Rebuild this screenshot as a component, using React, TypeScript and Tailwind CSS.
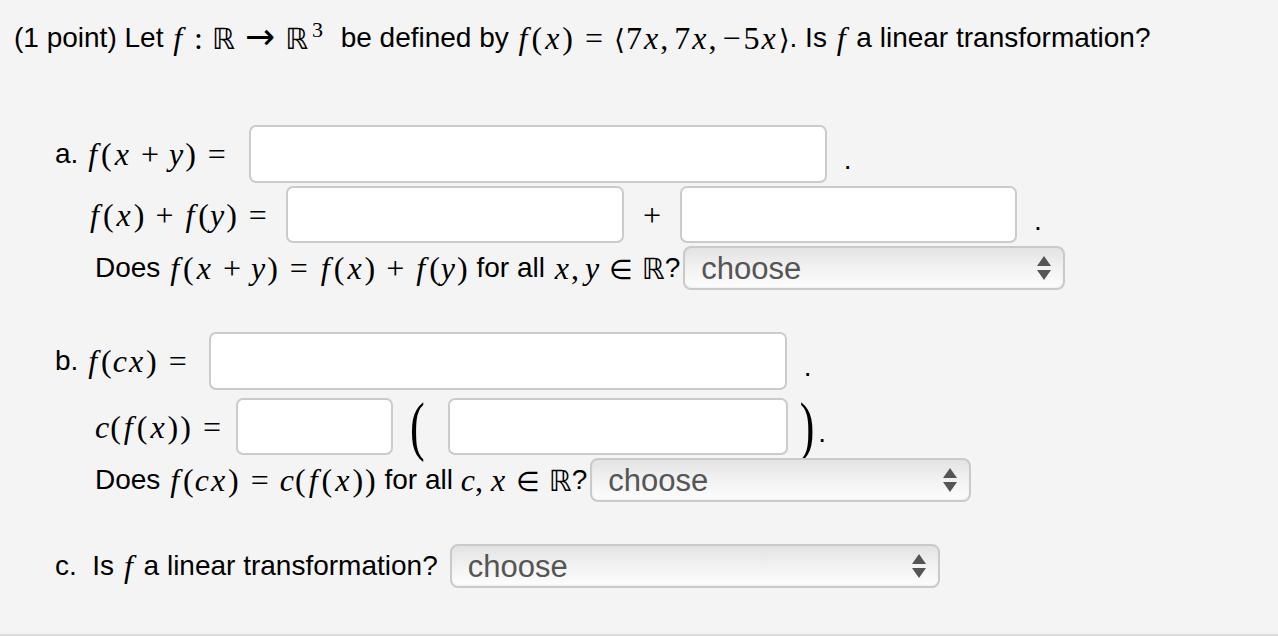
import React from "react";

// clases por caracter para imitar el espaciado de MathJax
const CLS: Record<string, string> = {
  f: "italic pl-[2px] pr-[3px]",
  x: "italic px-[2px]",
  y: "italic pr-[1px]",
  c: "italic",
  "(": "px-[1px]",
  ")": "px-[1px]",
  "+": "mx-[10px]",
  "=": "mx-[11px]",
  "∈": "mx-[9px] font-['DejaVu_Sans'] text-[27px]",
  "→": "mx-[10px] font-['DejaVu_Sans'] text-[36px] leading-none",
  ":": "mx-[9px]",
  ",": "mr-[6px]",
  "−": "mr-[3px]",
  "⟨": "font-['DejaVu_Serif'] text-[28px] pr-[1px]",
  "⟩": "font-['DejaVu_Serif'] text-[28px] pl-[1px]",
  "ℝ": "font-['DejaVu_Sans'] text-[29px]",
  "³": "ml-[4px] mr-[2px] text-[22px] relative -top-[12px]",
};

function M({ t }: { t: string }) {
  return (
    <span className="font-['Liberation_Serif'] text-[32px] whitespace-nowrap">
      {[...t].map((ch, i) => (
        <span key={i} className={CLS[ch] ?? ""}>
          {ch === "³" ? "3" : ch}
        </span>
      ))}
    </span>
  );
}

function Box({ w }: { w: string }) {
  return <div className={`${w} h-full bg-white border-2 border-[#cbcbcb] rounded-[7px]`} />;
}

function Choose({ w }: { w: string }) {
  return (
    <div
      className={`${w} h-full relative flex items-center rounded-[8px] border-2 border-[#cacaca] bg-gradient-to-b from-[#e3e3e3] via-[#f2f2f2] to-[#fdfdfd] shadow-[inset_0_-1px_2px_rgba(0,0,0,0.06)]`}
    >
      <span className="pl-[16px] text-[#555] text-[31px] leading-none">choose</span>
      <svg className="absolute right-[12px] top-1/2 -translate-y-1/2" width="14" height="28" viewBox="0 0 14 28">
        <polygon points="7,2 14,12 0,12" fill="#555" />
        <polygon points="0,16 14,16 7,26" fill="#555" />
      </svg>
    </div>
  );
}

function Dot({ ml }: { ml: string }) {
  return <span className={`${ml} text-[28px] relative top-[6px]`}>.</span>;
}

export default function App() {
  return (
    <div className="w-[1278px] h-[636px] bg-[#f4f4f4] border-b-2 border-[#dcdcdc] font-['Liberation_Sans'] text-[28px] text-black overflow-hidden">
      {/* titulo */}
      <div className="h-[76px] flex items-center pl-[14px] whitespace-pre">
        <span>(1 point) Let </span>
        <M t="f:ℝ→ℝ³" />
        <span>  be defined by </span>
        <M t="f(x)=⟨7x,7x,−5x⟩" />
        <span>. Is </span>
        <M t="f" />
        <span> a linear transformation?</span>
      </div>

      {/* a */}
      <div className="mt-[49px] h-[58px] flex items-center pl-[55px] whitespace-pre">
        <span>a. </span>
        <M t="f(x+y)=" />
        <div className="ml-[12px] h-full">
          <Box w="w-[578px]" />
        </div>
        <Dot ml="ml-[17px]" />
      </div>

      <div className="mt-[3px] h-[57px] flex items-center pl-[88px] whitespace-pre">
        <M t="f(x)+f(y)=" />
        <div className="ml-[8px] h-full">
          <Box w="w-[338px]" />
        </div>
        <span className="mx-[19px] font-['Liberation_Serif'] text-[32px]">+</span>
        <div className="h-full">
          <Box w="w-[337px]" />
        </div>
        <Dot ml="ml-[17px]" />
      </div>

      <div className="mt-[3px] h-[44px] flex items-center pl-[95px] whitespace-pre">
        <span>Does </span>
        <M t="f(x+y)=f(x)+f(y)" />
        <span> for all </span>
        <M t="x,y∈ℝ" />
        <span>?</span>
        <div className="ml-[3px] h-full">
          <Choose w="w-[382px]" />
        </div>
      </div>

      {/* b */}
      <div className="mt-[42px] h-[58px] flex items-center pl-[55px] whitespace-pre">
        <span>b. </span>
        <M t="f(cx)=" />
        <div className="ml-[11px] h-full">
          <Box w="w-[578px]" />
        </div>
        <Dot ml="ml-[17px]" />
      </div>

      <div className="mt-[8px] h-[57px] flex items-center pl-[95px] whitespace-pre">
        <M t="c(f(x))=" />
        <div className="ml-[4px] h-full">
          <Box w="w-[157px]" />
        </div>
        <span className="ml-[17px] mr-[23px] font-['Liberation_Serif'] text-[44px] leading-none scale-y-[1.5] inline-block">(</span>
        <div className="h-full">
          <Box w="w-[340px]" />
        </div>
        <span className="ml-[12px] font-['Liberation_Serif'] text-[44px] leading-none scale-y-[1.5] inline-block">)</span>
        <Dot ml="ml-[4px]" />
      </div>

      <div className="mt-[3px] h-[44px] flex items-center pl-[95px] whitespace-pre">
        <span>Does </span>
        <M t="f(cx)=c(f(x))" />
        <span> for all </span>
        <M t="c,x∈ℝ" />
        <span>?</span>
        <div className="ml-[3px] h-full">
          <Choose w="w-[381px]" />
        </div>
      </div>

      {/* c */}
      <div className="mt-[42px] h-[44px] flex items-center pl-[55px] whitespace-pre">
        <span>c.  Is </span>
        <M t="f" />
        <span> a linear transformation?</span>
        <div className="ml-[12px] h-full">
          <Choose w="w-[490px]" />
        </div>
      </div>
    </div>
  );
}
